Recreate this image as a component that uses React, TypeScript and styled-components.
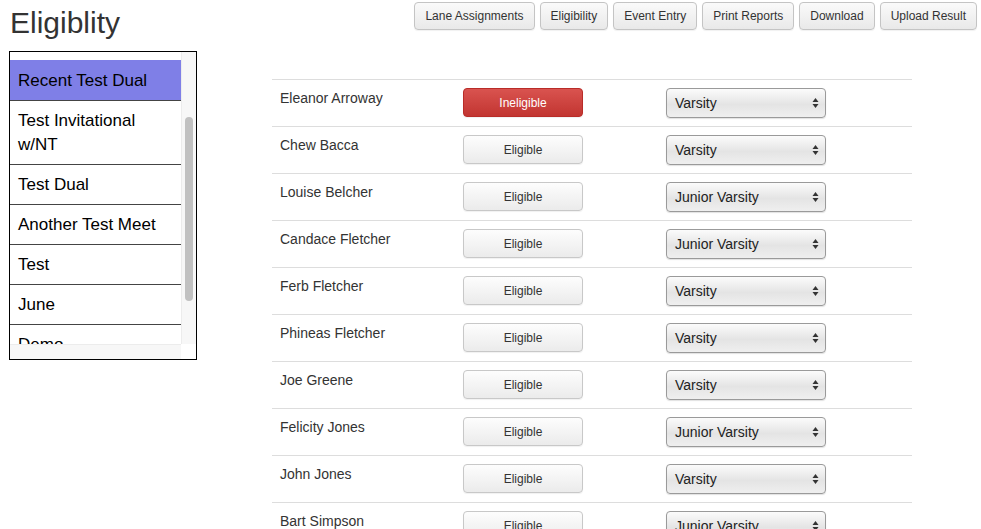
import React from 'react';
import styled, { createGlobalStyle } from 'styled-components';

const GlobalStyle = createGlobalStyle`
  html, body {
    margin: 0;
    padding: 0;
    background: #fff;
    font-family: "Liberation Sans", Arial, Helvetica, sans-serif;
    color: #333;
    overflow: hidden;
  }
`;

const Page = styled.div`
  width: 981px;
  height: 529px;
  overflow: hidden;
`;

const Header = styled.header`
  display: flex;
  justify-content: space-between;
  align-items: flex-start;
  padding: 0 4px 0 10px;
  height: 51px;
`;

const Title = styled.h1`
  margin: 6px 0 0;
  font-size: 30px;
  font-weight: 400;
  line-height: 33px;
  color: #333;
`;

const Nav = styled.nav`
  display: flex;
  gap: 5px;
  padding-top: 2px;
`;

const NavButton = styled.button`
  font-family: inherit;
  font-size: 12px;
  line-height: 18px;
  height: 28px;
  padding: 4px 10px;
  color: #333;
  border: 1px solid #c4c4c4;
  border-radius: 4px;
  background: linear-gradient(to bottom, #fafafa 0%, #e9e9e9 100%);
  box-shadow: 0 1px 1px rgba(0, 0, 0, 0.06);
  cursor: pointer;
`;

const Body = styled.div`
  display: flex;
  align-items: flex-start;
  padding-left: 9px;
`;

const Sidebar = styled.aside`
  width: 186px;
  height: 307px;
  border: 1px solid #000;
  display: grid;
  grid-template-columns: 171px 15px;
  grid-template-rows: 292px 15px;
`;

const MeetList = styled.ul`
  list-style: none;
  margin: 0;
  padding: 8px 0 0;
  overflow: hidden;
`;

const MeetItem = styled.li<{ $active?: boolean }>`
  font-size: 17px;
  line-height: 24px;
  color: #000;
  padding: ${p => (p.$active ? '9px' : '8px')} 8px 7px;
  border-bottom: 1px solid #444;
  background: ${p => (p.$active ? '#7f7fe7' : 'transparent')};
`;

const VTrack = styled.div`
  background: #f7f7f7;
  border-left: 1px solid #ececec;
  padding: 65px 3px 0 3px;
`;

const Thumb = styled.div`
  width: 8px;
  height: 184px;
  border-radius: 4px;
  background: #c1c1c1;
`;

const HTrack = styled.div`
  background: #f7f7f7;
  border-top: 1px solid #ececec;
`;

const Corner = styled.div`
  background: #fff;
`;

const Main = styled.main`
  padding: 28px 0 0 75px;
`;

const Table = styled.table`
  width: 640px;
  border-collapse: collapse;
  table-layout: fixed;
`;

// widths are content widths; cell padding adds 16px
const Cell = styled.td<{ $w: number }>`
  width: ${p => p.$w - 16}px;
  padding: 8px;
  border-top: 1px solid #ddd;
  vertical-align: top;
  font-size: 14px;
  line-height: 20px;
  color: #333;
`;

const StatusButton = styled.button<{ $danger?: boolean }>`
  width: 120px;
  height: 29px;
  font-family: inherit;
  font-size: 12px;
  border-radius: 4px;
  border: 1px solid ${p => (p.$danger ? '#b92c28' : '#c8c8c8')};
  color: ${p => (p.$danger ? '#fff' : '#333')};
  background: ${p =>
    p.$danger
      ? 'linear-gradient(to bottom, #d9534f 0%, #c23531 100%)'
      : 'linear-gradient(to bottom, #fdfdfd 0%, #ebebeb 100%)'};
  box-shadow: 0 1px 1px rgba(0, 0, 0, 0.06);
  cursor: pointer;
`;

const Select = styled.div`
  width: 160px;
  height: 30px;
  box-sizing: border-box;
  display: flex;
  align-items: center;
  justify-content: space-between;
  padding: 0 6px 0 8px;
  border: 1px solid #9a9a9a;
  border-radius: 4px;
  background: linear-gradient(to bottom, #fbfbfb 0%, #e4e4e4 55%, #efefef 100%);
  box-shadow: 0 1px 1px rgba(0, 0, 0, 0.12);
  font-size: 14px;
  color: #222;
`;

const Arrows = () => (
  <svg width="7" height="12" viewBox="0 0 7 12">
    <path d="M3.5 1 L6.5 5 L0.5 5 Z" fill="#333" />
    <path d="M3.5 11 L6.5 7 L0.5 7 Z" fill="#333" />
  </svg>
);

const meets = [
  'Recent Test Dual',
  'Test Invitational w/NT',
  'Test Dual',
  'Another Test Meet',
  'Test',
  'June',
  'Demo',
];

const swimmers: { name: string; eligible: boolean; team: string }[] = [
  { name: 'Eleanor Arroway', eligible: false, team: 'Varsity' },
  { name: 'Chew Bacca', eligible: true, team: 'Varsity' },
  { name: 'Louise Belcher', eligible: true, team: 'Junior Varsity' },
  { name: 'Candace Fletcher', eligible: true, team: 'Junior Varsity' },
  { name: 'Ferb Fletcher', eligible: true, team: 'Varsity' },
  { name: 'Phineas Fletcher', eligible: true, team: 'Varsity' },
  { name: 'Joe Greene', eligible: true, team: 'Varsity' },
  { name: 'Felicity Jones', eligible: true, team: 'Junior Varsity' },
  { name: 'John Jones', eligible: true, team: 'Varsity' },
  { name: 'Bart Simpson', eligible: true, team: 'Junior Varsity' },
];

const navItems = ['Lane Assignments', 'Eligibility', 'Event Entry', 'Print Reports', 'Download', 'Upload Result'];

export default function App() {
  return (
    <Page>
      <GlobalStyle />
      <Header>
        <Title>Eligiblity</Title>
        <Nav>
          {navItems.map(n => (
            <NavButton key={n}>{n}</NavButton>
          ))}
        </Nav>
      </Header>
      <Body>
        <Sidebar>
          <MeetList>
            {meets.map((m, i) => (
              <MeetItem key={m} $active={i === 0}>
                {m}
              </MeetItem>
            ))}
          </MeetList>
          <VTrack>
            <Thumb />
          </VTrack>
          <HTrack />
          <Corner />
        </Sidebar>
        <Main>
          <Table>
            <tbody>
              {swimmers.map(s => (
                <tr key={s.name}>
                  <Cell $w={183}>{s.name}</Cell>
                  <Cell $w={203}>
                    <StatusButton $danger={!s.eligible}>{s.eligible ? 'Eligible' : 'Ineligible'}</StatusButton>
                  </Cell>
                  <Cell $w={254}>
                    <Select>
                      <span>{s.team}</span>
                      <Arrows />
                    </Select>
                  </Cell>
                </tr>
              ))}
            </tbody>
          </Table>
        </Main>
      </Body>
    </Page>
  );
}
